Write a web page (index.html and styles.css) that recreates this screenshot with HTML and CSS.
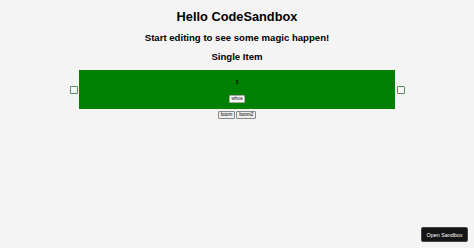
FILE: index.html
```html
<!DOCTYPE html>
<html lang="en">
<head>
    <meta charset="UTF-8">
    <meta name="viewport" content="width=device-width, initial-scale=1.0">
    <title>Hello CodeSandbox</title>
    <link rel="stylesheet" href="styles.css">
</head>
<body>

    <div class="app">
        <h1>Hello CodeSandbox</h1>
        <h2>Start editing to see some magic happen!</h2>
        <h2>Single Item</h2>

        <div class="slider">
            <span class="check"></span>
            <div class="item">
                <div class="count">1</div>
                <button class="whoa">whoa</button>
            </div>
            <span class="check"></span>
        </div>

        <div class="controls">
            <div class="left"><span class="dot">.</span></div>
            <div class="buttons">
                <button class="boom">boom</button>
                <button class="boom">boom2</button>
            </div>
            <div></div>
        </div>
    </div>

    <a class="open-sandbox" href="#">Open Sandbox</a>

</body>
</html>
```

FILE: styles.css
```css
body {
    margin: 0;
    background-color: #f4f4f4;
    color: #000;
    font-family: "Liberation Sans", Arial, sans-serif;
}
.app {
    text-align: center;
}
h1 {
    font-size: 12.8px;
    margin: 8.6px 0;
}
h2 {
    font-size: 9.6px;
    margin: 8px 0;
}
.slider {
    display: flex;
    justify-content: center;
    align-items: center;
    gap: 1.5px;
}
.check {
    width: 6px;
    height: 6px;
    border: 1px solid #5b8a5b;
    background-color: #f8f8f8;
    border-radius: 1px;
}
.item {
    width: 316px;
    height: 39px;
    box-sizing: border-box;
    padding-top: 8.5px;
    background-color: #008000;
    font-size: 5px;
    line-height: 6px;
}
.count {
    font-size: 5.8px;
    font-weight: bold;
    line-height: 6.4px;
}
.whoa {
    display: block;
    margin: 9.5px auto 0;
    font-family: "Liberation Sans", Arial, sans-serif;
    font-size: 4.6px;
    line-height: 5px;
    padding: 0.5px 2px;
    background-color: #fff;
    border: 0.6px solid #aaa;
    border-radius: 1px;
    color: #000;
}
.controls {
    display: grid;
    grid-template-columns: 1fr auto 1fr;
    align-items: center;
    margin-top: 1.6px;
    font-size: 5px;
    line-height: 7px;
}
.left {
    text-align: right;
    padding-right: 11px;
}
.dot {
    color: #999;
}
.buttons {
    display: flex;
    align-items: center;
    gap: 1px;
}
.boom {
    font-family: "Liberation Sans", Arial, sans-serif;
    font-size: 4.6px;
    line-height: 5px;
    padding: 0.5px 2px;
    background-color: #efefef;
    border: 0.6px solid #888;
    border-radius: 1px;
    color: #000;
}
.open-sandbox {
    position: fixed;
    right: 6px;
    bottom: 6px;
    width: 47px;
    height: 15px;
    box-sizing: border-box;
    display: flex;
    align-items: center;
    justify-content: center;
    background-color: #151515;
    border: 0.6px solid #444;
    border-radius: 2px;
    color: #fff;
    font-size: 5.4px;
    text-decoration: none;
}
```
